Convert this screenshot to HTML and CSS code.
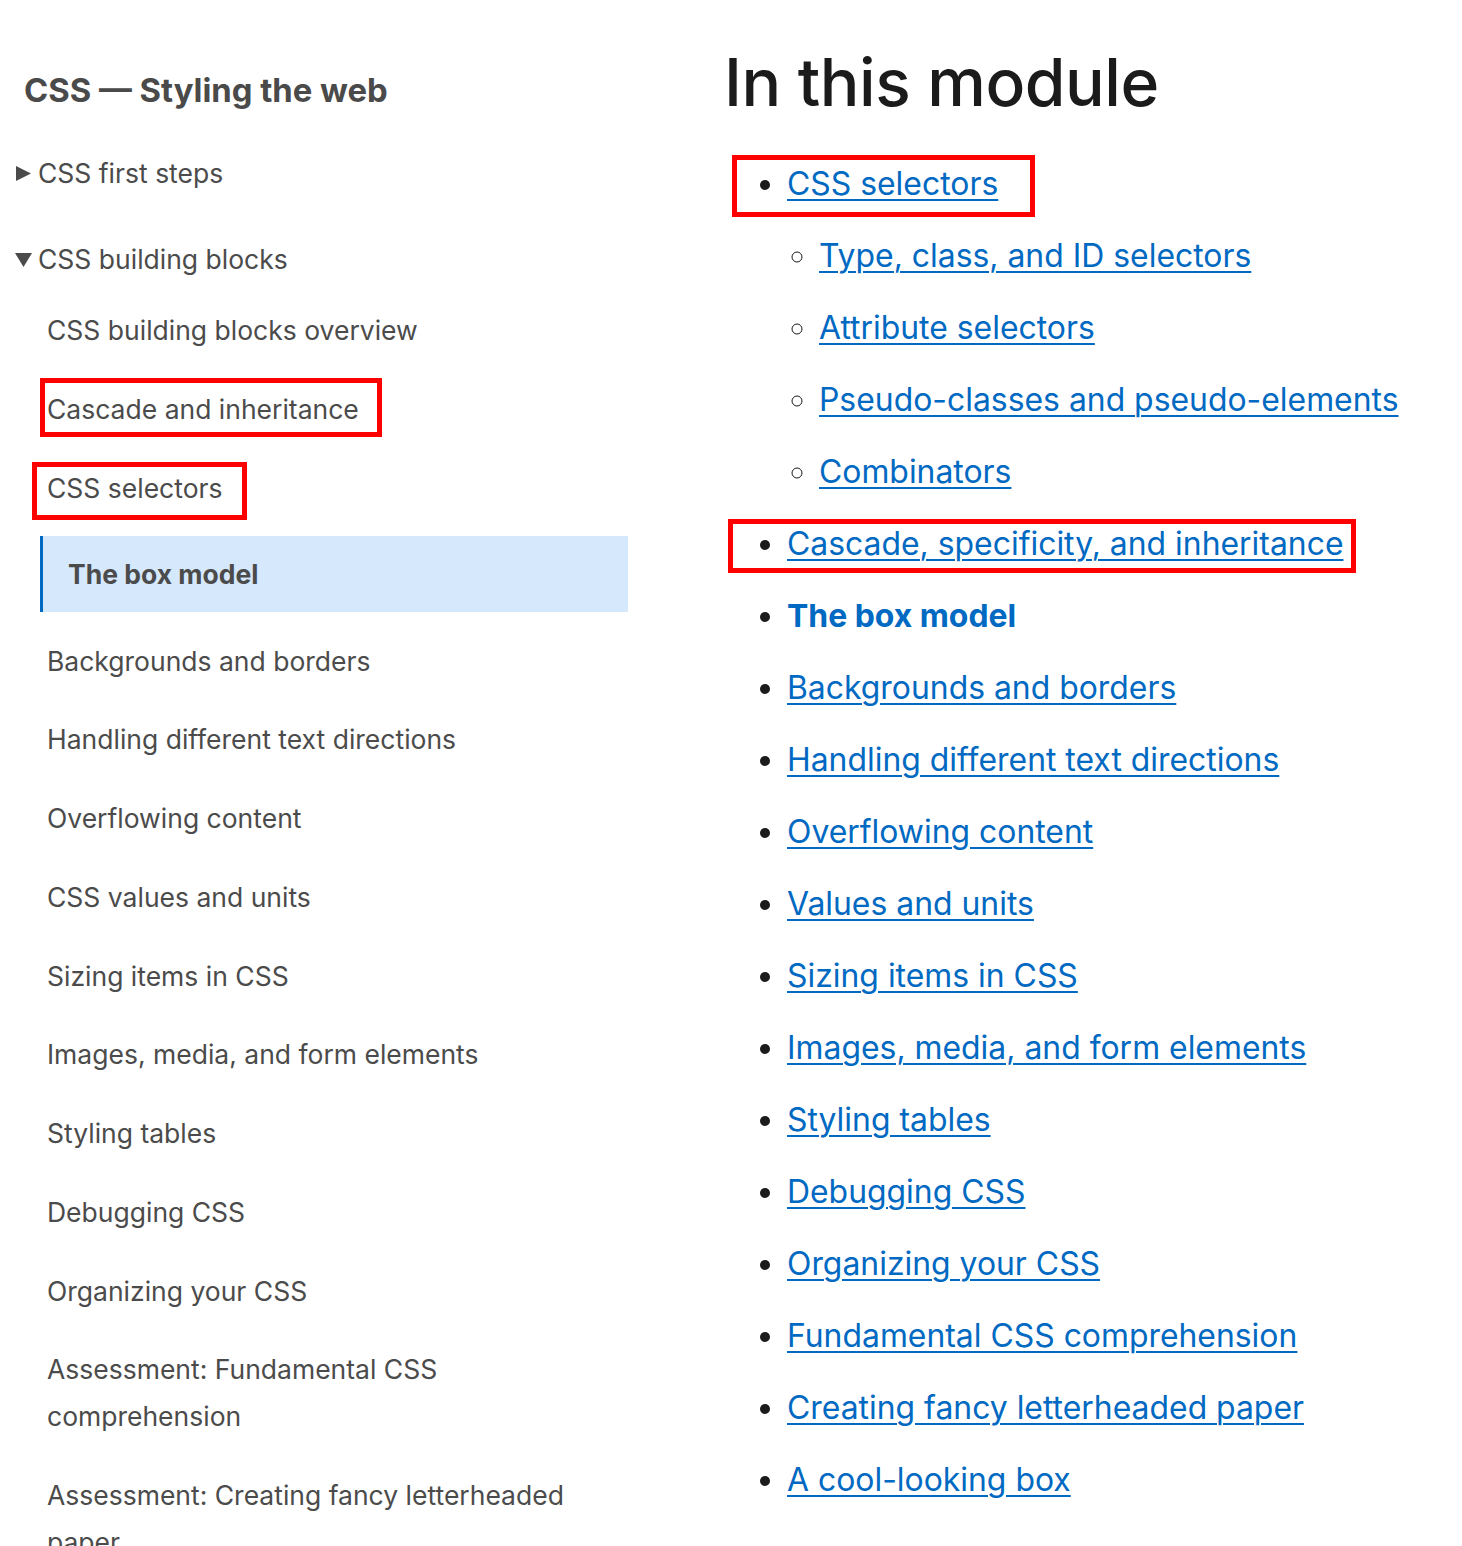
FILE: index.html
```html
<!DOCTYPE html>
<html lang="en">
<head>
<meta charset="utf-8">
<title>CSS building blocks</title>
<link rel="stylesheet" href="styles.css">
</head>
<body>
<div class="page">
  <nav class="sidebar">
    <h2 class="side-title">CSS — Styling the web</h2>
    <div class="group group-closed">
      <div class="summary"><svg class="caret" width="17" height="17" viewBox="0 0 17 17"><polygon points="1,1 16,8.5 1,16" fill="#4b4b4b"/></svg><span>CSS first steps</span></div>
    </div>
    <div class="group group-open">
      <div class="summary"><svg class="caret" width="17" height="17" viewBox="0 0 17 17"><polygon points="0,2 17,2 8.5,16" fill="#4b4b4b"/></svg><span>CSS building blocks</span></div>
      <ul class="side-sub">
        <li class="side-item first"><a class="side-link">CSS building blocks overview</a></li>
        <li class="side-item"><span class="mark mark-side-cascade"><a class="side-link">Cascade and inheritance</a></span></li>
        <li class="side-item"><span class="mark mark-side-selectors"><a class="side-link">CSS selectors</a></span></li>
        <li class="side-item current"><a class="side-link">The box model</a></li>
        <li class="side-item"><a class="side-link">Backgrounds and borders</a></li>
        <li class="side-item"><a class="side-link">Handling different text directions</a></li>
        <li class="side-item"><a class="side-link">Overflowing content</a></li>
        <li class="side-item"><a class="side-link">CSS values and units</a></li>
        <li class="side-item"><a class="side-link">Sizing items in CSS</a></li>
        <li class="side-item"><a class="side-link">Images, media, and form elements</a></li>
        <li class="side-item"><a class="side-link">Styling tables</a></li>
        <li class="side-item"><a class="side-link">Debugging CSS</a></li>
        <li class="side-item"><a class="side-link">Organizing your CSS</a></li>
        <li class="side-item"><a class="side-link">Assessment: Fundamental CSS comprehension</a></li>
        <li class="side-item"><a class="side-link">Assessment: Creating fancy letterheaded paper</a></li>
      </ul>
    </div>
  </nav>
  <main class="content">
    <h1 class="heading">In this module</h1>
    <ul class="module-list">
      <li><span class="mark mark-main-selectors"><a class="mlink" href="#">CSS selectors</a></span>
        <ul class="module-sub">
          <li><a class="mlink" href="#">Type, class, and ID selectors</a></li>
          <li><a class="mlink" href="#">Attribute selectors</a></li>
          <li><a class="mlink" href="#">Pseudo-classes and pseudo-elements</a></li>
          <li><a class="mlink" href="#">Combinators</a></li>
        </ul>
      </li>
      <li><span class="mark mark-main-cascade"><a class="mlink" href="#">Cascade, specificity, and inheritance</a></span></li>
      <li><strong class="mcurrent">The box model</strong></li>
      <li><a class="mlink" href="#">Backgrounds and borders</a></li>
      <li><a class="mlink" href="#">Handling different text directions</a></li>
      <li><a class="mlink" href="#">Overflowing content</a></li>
      <li><a class="mlink" href="#">Values and units</a></li>
      <li><a class="mlink" href="#">Sizing items in CSS</a></li>
      <li><a class="mlink" href="#">Images, media, and form elements</a></li>
      <li><a class="mlink" href="#">Styling tables</a></li>
      <li><a class="mlink" href="#">Debugging CSS</a></li>
      <li><a class="mlink" href="#">Organizing your CSS</a></li>
      <li><a class="mlink" href="#">Fundamental CSS comprehension</a></li>
      <li><a class="mlink" href="#">Creating fancy letterheaded paper</a></li>
      <li><a class="mlink" href="#">A cool-looking box</a></li>
    </ul>
  </main>
</div>
</body>
</html>
```
FILE: styles.css
```css
* { box-sizing: border-box; }
html, body { margin: 0; padding: 0; background: #fff; }
body {
  font-family: Inter, "Noto Sans", "Liberation Sans", sans-serif;
  color: #4b4b4b;
  overflow: hidden;
  height: 1546px;
}
.page {
  display: flex;
  align-items: flex-start;
}
.sidebar {
  width: 726px;
  flex: none;
  padding: 70px 0 0 0;
}
.side-title {
  margin: 0 0 40px 24px;
  font-size: 32.8px;
  line-height: 40px;
  font-weight: 700;
  color: #4a4a4a;
}
.group { margin-left: 15px; }
.group-closed { margin-bottom: 39px; }
.summary {
  display: flex;
  align-items: center;
  gap: 6px;
  font-size: 26.5px;
  line-height: 47px;
  color: #4b4b4b;
}
.caret { flex: none; }
.side-sub {
  list-style: none;
  margin: 24px 0 0 0;
  padding: 0;
  display: flex;
  flex-direction: column;
  gap: 31.75px;
  width: 613px;
}
.side-item {
  font-size: 26.5px;
  line-height: 47px;
  padding-left: 32px;
  padding-right: 20px;
}
.side-link { color: #4b4b4b; text-decoration: none; }
.side-item.current {
  margin: -7px 0 -6.5px 25px;
  padding: 14.5px 20px 14.5px 25px;
  background: #d5e8fc;
  border-left: 3px solid #0069c2;
  font-weight: 700;
}
.mark {
  position: relative;
  display: inline-block;
}
.mark::after {
  content: "";
  position: absolute;
  border: 5px solid #ff0000;
  pointer-events: none;
}
.mark-side-cascade::after { left: -7px; right: -23px; top: -8px; bottom: -4px; }
.mark-side-selectors::after { left: -15px; right: -24px; top: -3px; bottom: -8px; }
.mark-main-selectors::after { left: -55px; right: -37px; top: -5px; bottom: -9px; }
.mark-main-cascade::after { left: -59px; right: -13px; top: -1px; bottom: -5px; }

.content {
  flex: 1;
  padding-top: 42px;
}
.heading {
  margin: 0 0 38px -2px;
  font-size: 66px;
  line-height: 80px;
  font-weight: 500;
  color: #1b1b1b;
  letter-spacing: -0.5px;
}
.module-list {
  margin: 0;
  padding-left: 61px;
  font-size: 31.9px;
  line-height: 48px;
  color: #1b1b1b;
}
.module-list li { margin-bottom: 24px; }
.module-sub {
  list-style: circle;
  margin: 24px 0 0 0;
  padding-left: 32px;
}
.mlink {
  color: #0069c2;
  text-decoration: underline;
  text-decoration-thickness: 2px;
  text-underline-offset: 4px;
}
.mcurrent { color: #0069c2; font-weight: 700; }
```
